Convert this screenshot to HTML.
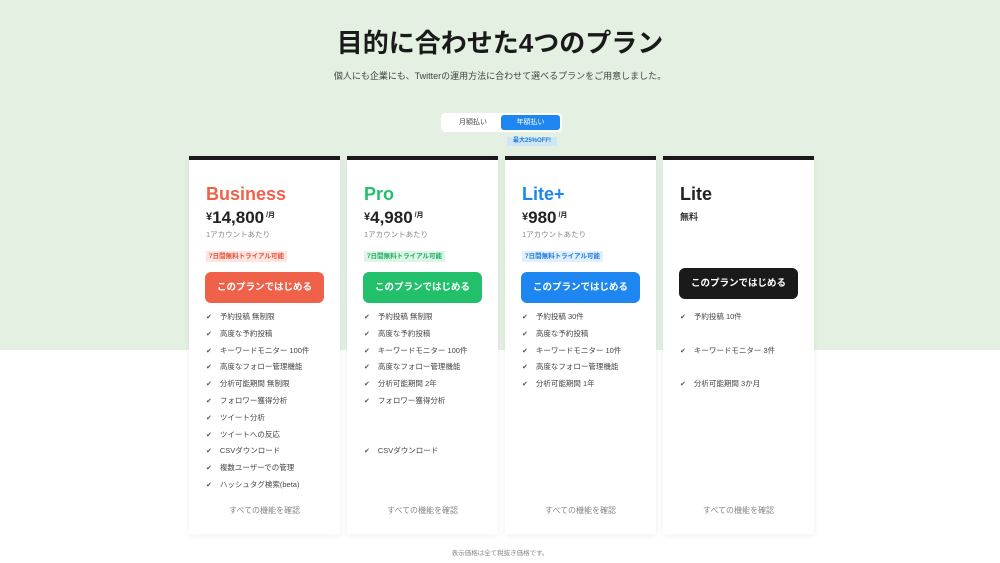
<!DOCTYPE html><html><head><meta charset="utf-8"><style>
*{margin:0;padding:0;box-sizing:border-box}
body{width:1000px;height:563px;position:relative;overflow:hidden;background:#fff;font-family:"Liberation Sans","Noto Sans CJK JP",sans-serif;color:#222}
.bg{position:absolute;left:0;top:0;width:1000px;height:350px;background:#e3f0e2}
.a{position:absolute}
h1{position:absolute;top:23px;width:1000px;text-align:center;font-size:26px;font-weight:700;color:#1a1a1a}
.sub{top:69px;width:1000px;text-align:center;font-size:9px;color:#444}
.tog{left:441px;top:113px;width:121px;height:19px;background:#fff;border-radius:4px;font-size:7px}
.tog span{position:absolute;top:2px;height:15px;line-height:15px;text-align:center;border-radius:3px}
.badge{left:507px;top:137px;width:50px;height:9px;background:#cfe6f5;color:#1e7ad6;font-size:6px;text-align:center;line-height:9px;font-weight:700}
.card{position:absolute;top:156px;width:151px;height:378px;background:#fff;border-top:4px solid #1a1a1a;box-shadow:0 2px 6px rgba(0,0,0,.06)}
.nm{position:absolute;left:17px;top:24px;font-size:18px;font-weight:700}
.pr{position:absolute;left:17px;top:48px;font-size:17px;font-weight:700;color:#222}
.pr small{font-size:7px;vertical-align:6px}
.pr i{font-style:normal;font-size:11px;vertical-align:3px}
.per{position:absolute;left:17px;top:69px;font-size:7.5px;color:#888}
.tr{position:absolute;left:17px;top:91px;height:11px;padding:0 3px;font-size:6.5px;line-height:11px;font-weight:700}
.btn{position:absolute;left:16px;top:112px;width:119px;height:31px;border-radius:6px;color:#fff;font-size:9.5px;font-weight:700;text-align:center;line-height:31px}
ul{position:absolute;left:17px;top:149px;list-style:none;font-size:7.5px;color:#444}
li{height:16.8px;line-height:16.8px}
li:before{content:"✔";font-size:7px;margin-right:8px;color:#555}
li.e:before{content:""}
.lk{position:absolute;left:0;width:151px;top:345px;text-align:center;font-size:8px;color:#888}
.note{top:547px;width:1000px;text-align:center;font-size:6.5px;color:#888}
</style></head><body>
<div class="bg"></div>
<h1>目的に合わせた4つのプラン</h1>
<div class="a sub">個人にも企業にも、Twitterの運用方法に合わせて選べるプランをご用意しました。</div>
<div class="a tog"><span style="left:3px;width:58px;color:#444">月額払い</span><span style="left:60px;width:59px;background:#1e86f0;color:#fff">年額払い</span></div>
<div class="a badge">最大25%OFF!</div>

<div class="card" style="left:189px">
<div class="nm" style="color:#f0614a">Business</div>
<div class="pr"><i>¥</i>14,800<small> /月</small></div>
<div class="per">1アカウントあたり</div>
<div class="tr" style="background:#fde4e0;color:#e0533d">7日間無料トライアル可能</div>
<div class="btn" style="background:#f0614a">このプランではじめる</div>
<ul><li>予約投稿 無制限</li><li>高度な予約投稿</li><li>キーワードモニター 100件</li><li>高度なフォロー管理機能</li><li>分析可能期間 無制限</li><li>フォロワー獲得分析</li><li>ツイート分析</li><li>ツイートへの反応</li><li>CSVダウンロード</li><li>複数ユーザーでの管理</li><li>ハッシュタグ検索(beta)</li></ul>
<div class="lk">すべての機能を確認</div></div>

<div class="card" style="left:347px">
<div class="nm" style="color:#22c06a">Pro</div>
<div class="pr"><i>¥</i>4,980<small> /月</small></div>
<div class="per">1アカウントあたり</div>
<div class="tr" style="background:#dcf6e6;color:#1fae5e">7日間無料トライアル可能</div>
<div class="btn" style="background:#22c06a">このプランではじめる</div>
<ul><li>予約投稿 無制限</li><li>高度な予約投稿</li><li>キーワードモニター 100件</li><li>高度なフォロー管理機能</li><li>分析可能期間 2年</li><li>フォロワー獲得分析</li><li class="e"></li><li class="e"></li><li>CSVダウンロード</li></ul>
<div class="lk">すべての機能を確認</div></div>

<div class="card" style="left:505px">
<div class="nm" style="color:#1e86f0">Lite+</div>
<div class="pr"><i>¥</i>980<small> /月</small></div>
<div class="per">1アカウントあたり</div>
<div class="tr" style="background:#e0effd;color:#1e7ad6">7日間無料トライアル可能</div>
<div class="btn" style="background:#1e86f0">このプランではじめる</div>
<ul><li>予約投稿 30件</li><li>高度な予約投稿</li><li>キーワードモニター 10件</li><li>高度なフォロー管理機能</li><li>分析可能期間 1年</li></ul>
<div class="lk">すべての機能を確認</div></div>

<div class="card" style="left:663px">
<div class="nm" style="color:#222">Lite</div>
<div class="a" style="left:17px;top:50px;font-size:9px;font-weight:700;color:#333">無料</div>
<div class="btn" style="background:#1a1a1a;top:108px">このプランではじめる</div>
<ul><li>予約投稿 10件</li><li class="e"></li><li>キーワードモニター 3件</li><li class="e"></li><li>分析可能期間 3か月</li></ul>
<div class="lk">すべての機能を確認</div></div>

<div class="a note">表示価格は全て税抜き価格です。</div>
</body></html>
